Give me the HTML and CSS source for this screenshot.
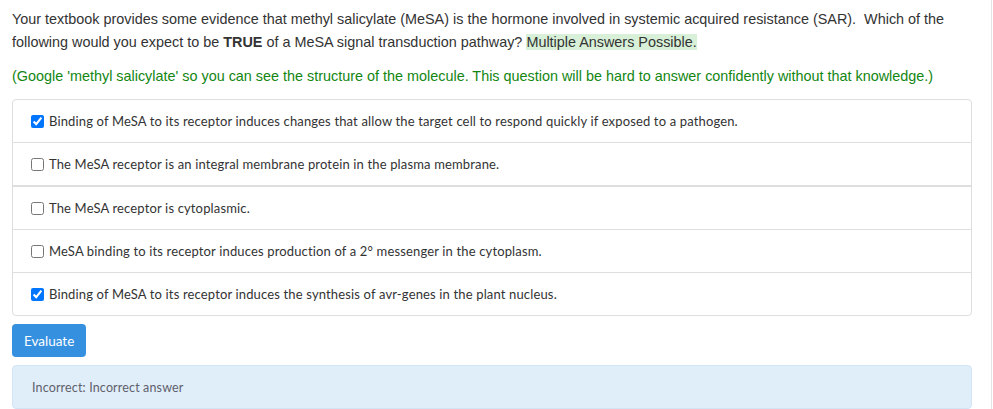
FILE: index.html
```html
<!DOCTYPE html>
<html>
<head>
<meta charset="utf-8">
<link rel="stylesheet" href="styles.css">
</head>
<body>
<div class="page">
  <p class="question">Your textbook provides some evidence that methyl salicylate (MeSA) is the hormone involved in systemic acquired resistance (SAR).&nbsp; Which of the following would you expect to be <strong>TRUE</strong> of a MeSA signal transduction pathway? <span class="hl">Multiple Answers Possible.</span></p>
  <p class="hint">(Google 'methyl salicylate' so you can see the structure of the molecule. This question will be hard to answer confidently without that knowledge.)</p>
  <div class="options">
    <label class="option"><input type="checkbox" checked><span>Binding of MeSA to its receptor induces changes that allow the target cell to respond quickly if exposed to a pathogen.</span></label>
    <label class="option"><input type="checkbox"><span>The MeSA receptor is an integral membrane protein in the plasma membrane.</span></label>
    <label class="option thick"><input type="checkbox"><span>The MeSA receptor is cytoplasmic.</span></label>
    <label class="option"><input type="checkbox"><span>MeSA binding to its receptor induces production of a 2° messenger in the cytoplasm.</span></label>
    <label class="option"><input type="checkbox" checked><span>Binding of MeSA to its receptor induces the synthesis of avr-genes in the plant nucleus.</span></label>
  </div>
  <button class="btn">Evaluate</button>
  <div class="alert">Incorrect: Incorrect answer</div>
</div>
</body>
</html>
```
FILE: styles.css
```css
html, body {
  margin: 0;
  padding: 0;
  background: #fff;
}
.page {
  box-sizing: border-box;
  width: 992px;
  min-height: 409px;
  padding: 8px 19px 0 12px;
  border-right: 1px solid #e3e3e3;
  font-family: "Lato", "Noto Sans", sans-serif;
}
.question, .hint {
  font-family: "Liberation Sans", Arial, sans-serif;
  font-size: 14.4px;
  line-height: 23px;
  margin: 0 0 11px 0;
  color: #333;
}
.question strong {
  font-weight: bold;
}
.hl {
  background: #d8f0d8;
}
.hint {
  color: #138613;
}
.options {
  border: 1px solid #dedede;
  border-radius: 4px;
  margin-top: 0;
}
.option {
  display: flex;
  align-items: center;
  gap: 5px;
  height: 42px;
  padding-left: 18px;
  border-top: 1px solid #dedede;
  font-size: 13px;
  letter-spacing: 0.15px;
  color: #333;
  cursor: pointer;
}
.option:first-child {
  border-top: none;
}
.option.thick {
  border-top: 2px solid #dedede;
}
.option input {
  margin: 0;
  width: 13px;
  height: 13px;
}
.btn {
  display: block;
  margin-top: 8px;
  height: 33px;
  padding: 0 12px;
  border: none;
  border-radius: 4px;
  background: #3590df;
  color: #fff;
  font-family: "Lato", "Noto Sans", sans-serif;
  font-size: 13.5px;
}
.alert {
  box-sizing: border-box;
  margin-top: 8px;
  height: 44px;
  padding-left: 19px;
  display: flex;
  align-items: center;
  background: #e0eefa;
  border: 1px solid #d3e5f5;
  border-radius: 4px;
  color: #5f5f6b;
  font-size: 12.5px;
  letter-spacing: 0.15px;
}
```
